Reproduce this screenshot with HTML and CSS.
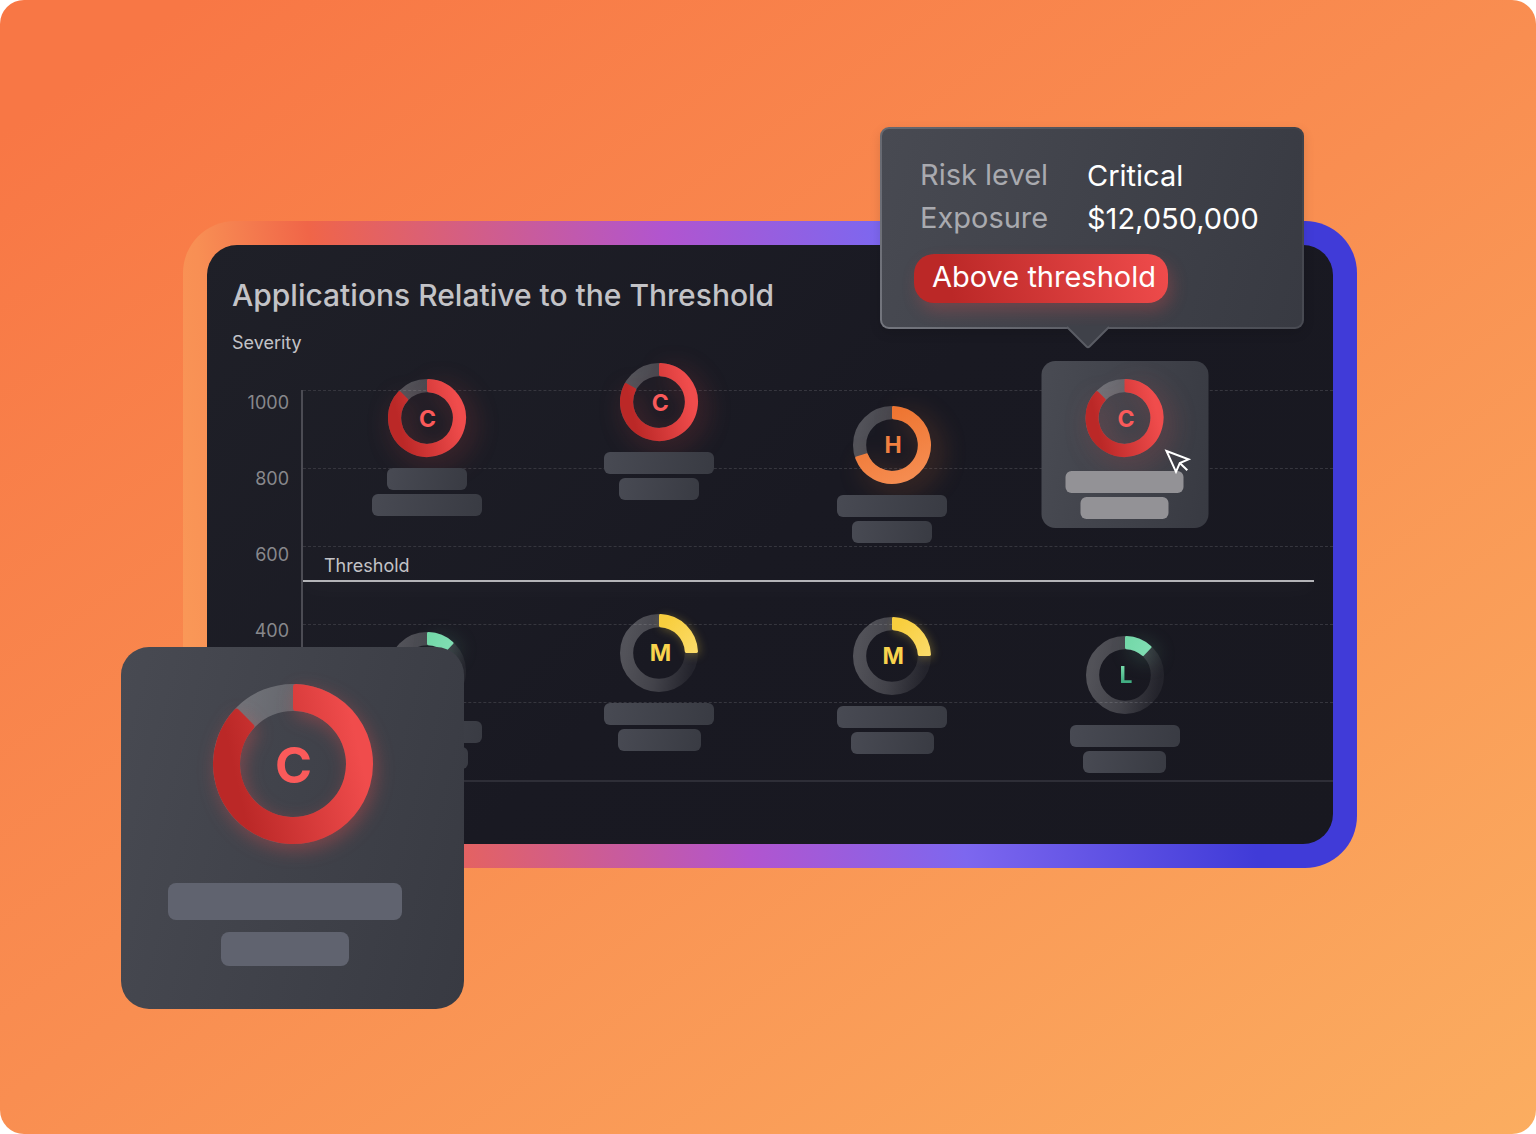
FILE: index.html
```html
<!DOCTYPE html>
<html lang="en">
<head>
    <meta charset="UTF-8">
    <meta name="viewport" content="width=device-width, initial-scale=1.0">
    <title>Applications Relative to the Threshold</title>
    <link rel="stylesheet" href="styles.css">
</head>
<body>
    <!-- shared gradients and ring shapes -->
    <svg class="defs" width="0" height="0" aria-hidden="true">
        <defs>
            <linearGradient id="red" gradientUnits="userSpaceOnUse" x1="22" y1="90" x2="145" y2="62">
                <stop offset="0" stop-color="#bb2827"/>
                <stop offset="1" stop-color="#f04c4c"/>
            </linearGradient>
            <linearGradient id="orange" gradientUnits="userSpaceOnUse" x1="50" y1="20" x2="110" y2="150">
                <stop offset="0" stop-color="#ee7430"/>
                <stop offset="1" stop-color="#f58c50"/>
            </linearGradient>
            <linearGradient id="yellow" gradientUnits="userSpaceOnUse" x1="90" y1="20" x2="155" y2="75">
                <stop offset="0" stop-color="#f8ce3e"/>
                <stop offset="1" stop-color="#fbdb68"/>
            </linearGradient>
            <linearGradient id="green" gradientUnits="userSpaceOnUse" x1="80" y1="10" x2="130" y2="30">
                <stop offset="0" stop-color="#73d8a8"/>
                <stop offset="1" stop-color="#80deb3"/>
            </linearGradient>
            <linearGradient id="track" gradientUnits="userSpaceOnUse" x1="10" y1="70" x2="150" y2="95">
                <stop offset="0" stop-color="#fff" stop-opacity=".25"/>
                <stop offset=".5" stop-color="#fff" stop-opacity=".18"/>
                <stop offset="1" stop-color="#fff" stop-opacity=".05"/>
            </linearGradient>
            <circle id="ring" cx="80" cy="80" r="66.5" fill="none" stroke="url(#track)" stroke-width="27"/>
            <path id="arc-315" d="M83 3.06A77 77 0 1 1 23.48 27.72L38.34 42.58A56 56 0 1 0 83 24.08Z"/>
            <path id="arc-300" d="M83 3.06A77 77 0 1 1 11.87 44.13L30.07 54.64A56 56 0 1 0 83 24.08Z"/>
            <path id="arc-252" d="M83 3.06A77 77 0 1 1 7.76 106.63L27.75 100.13A56 56 0 1 0 83 24.08Z"/>
            <path id="arc-90" d="M83 3.06A77 77 0 0 1 156.94 77L135.92 77A56 56 0 0 0 83 24.08Z"/>
            <path id="arc-44" d="M83 3.06A77 77 0 0 1 131.31 22.59L116.7 37.7A56 56 0 0 0 83 24.08Z"/>
        </defs>
    </svg>

    <main class="stage">
        <div class="frame">
            <section class="panel">
                <h1>Applications Relative to the Threshold</h1>
                <p class="axis-title">Severity</p>

                <div class="chart">
                    <ul class="axis">
                        <li>1000</li>
                        <li>800</li>
                        <li>600</li>
                        <li>400</li>
                    </ul>

                    <div class="plot">
                        <div class="grid">
                            <span></span>
                            <span></span>
                            <span></span>
                            <span></span>
                            <span></span>
                        </div>

                        <div class="threshold">Threshold</div>

                        <div class="point critical" style="left: 12%; top: -2.8%">
                            <div class="donut">
                                <svg viewBox="0 0 160 160"><use href="#ring"/><use class="arc" href="#arc-315"/></svg>
                                <span>C</span>
                            </div>
                            <i class="bar short"></i>
                            <i class="bar"></i>
                        </div>

                        <div class="point critical" style="left: 34.6%; top: -6.8%">
                            <div class="donut">
                                <svg viewBox="0 0 160 160"><use href="#ring"/><use class="arc" href="#arc-300"/></svg>
                                <span>C</span>
                            </div>
                            <i class="bar"></i>
                            <i class="bar short"></i>
                        </div>

                        <div class="point high" style="left: 57.2%; top: 4.1%">
                            <div class="donut">
                                <svg viewBox="0 0 160 160"><use href="#ring"/><use class="arc" href="#arc-252"/></svg>
                                <span>H</span>
                            </div>
                            <i class="bar"></i>
                            <i class="bar short"></i>
                        </div>

                        <div class="point critical selected" style="left: 79.8%; top: -7.4%">
                            <div class="donut">
                                <svg viewBox="0 0 160 160"><use href="#ring"/><use class="arc" href="#arc-315"/></svg>
                                <span>C</span>
                            </div>
                            <i class="bar"></i>
                            <i class="bar short"></i>
                            <svg class="cursor" viewBox="0 0 32 32">
                                <path d="M6 6L28 14.3L19.3 18L15.5 26.8Z"/>
                                <path d="M19.3 18L26.8 25.3"/>
                            </svg>
                        </div>

                        <div class="point low" style="left: 12%; top: 62.1%">
                            <div class="donut">
                                <svg viewBox="0 0 160 160"><use href="#ring"/><use class="arc" href="#arc-44"/></svg>
                            </div>
                            <i class="bar"></i>
                            <i class="bar short"></i>
                        </div>

                        <div class="point medium" style="left: 34.6%; top: 57.4%">
                            <div class="donut">
                                <svg viewBox="0 0 160 160"><use href="#ring"/><use class="arc" href="#arc-90"/></svg>
                                <span>M</span>
                            </div>
                            <i class="bar"></i>
                            <i class="bar short"></i>
                        </div>

                        <div class="point medium" style="left: 57.2%; top: 58.2%">
                            <div class="donut">
                                <svg viewBox="0 0 160 160"><use href="#ring"/><use class="arc" href="#arc-90"/></svg>
                                <span>M</span>
                            </div>
                            <i class="bar"></i>
                            <i class="bar short"></i>
                        </div>

                        <div class="point low" style="left: 79.8%; top: 63%">
                            <div class="donut">
                                <svg viewBox="0 0 160 160"><use href="#ring"/><use class="arc" href="#arc-44"/></svg>
                                <span>L</span>
                            </div>
                            <i class="bar"></i>
                            <i class="bar short"></i>
                        </div>
                    </div>
                </div>
            </section>

            <div class="tooltip" role="tooltip">
                <dl>
                    <dt>Risk level</dt>
                    <dd>Critical</dd>
                    <dt>Exposure</dt>
                    <dd>$12,050,000</dd>
                </dl>
                <span class="badge">Above threshold</span>
                <svg class="arrow" viewBox="0 0 44 24">
                    <path class="arrow-fill" d="M2 0V2L20.5 20.5Q22 22 23.5 20.5L42 2V0Z"/>
                    <path class="arrow-line" d="M1 1L20.5 20.5Q22 22 23.5 20.5L43 1"/>
                </svg>
            </div>

            <aside class="card critical">
                <div class="donut large">
                    <svg viewBox="0 0 160 160"><use href="#ring"/><use class="arc" href="#arc-315"/></svg>
                    <span>C</span>
                </div>
                <div class="card-lines">
                    <i></i>
                    <i></i>
                </div>
            </aside>
        </div>
    </main>
</body>
</html>
```
FILE: styles.css
```css
* {
    box-sizing: border-box;
}
body {
    margin: 0;
    background: #fff;
    font-family: Inter, "Liberation Sans", sans-serif;
    color: #c3c3c7;
}
.defs {
    position: absolute;
}
.stage {
    min-height: 100vh;
    padding: 221px 179px 266px 183px;
    border-radius: 24px;
    background: linear-gradient(145deg, #f87745 6%, #f98e51 50%, #fbad60);
    overflow: hidden;
}

/* chart window */
.frame {
    position: relative;
    padding: 24px;
    border-radius: 52px;
    background: linear-gradient(82deg, #fb9c59 0%, #f88f54 8%, #f06548 17%, #b155cf 45%, #7d67ef 62%, #403bd8 85%);
}
.panel {
    padding: 30px 0 62px;
    border-radius: 30px;
    background: linear-gradient(135deg, #1f2028, #191922 50%, #181820);
}
h1 {
    margin: 0 25px;
    font-size: 30px;
    font-weight: 500;
    line-height: 40px;
}
.axis-title {
    margin: 16px 25px 35px;
    font-size: 18px;
    line-height: 24px;
}
.chart {
    display: grid;
    grid-template-columns: 94px 1fr;
}
.axis {
    display: flex;
    flex-direction: column;
    gap: 52px;
    margin: 0;
    padding: 1px 12px 0 0;
    list-style: none;
    text-align: right;
    font-size: 18px;
    line-height: 24px;
    color: #88888c;
}
.plot {
    position: relative;
    height: 392px;
    border-left: 2px solid #4c4c54;
    border-bottom: 2px solid #2e2e37;
}
.grid {
    display: flex;
    flex-direction: column;
    height: 100%;
}
.grid span {
    flex: 1;
    border-top: 1px dashed #36363e;
}
.threshold {
    position: absolute;
    top: 162px;
    left: 0;
    right: 19px;
    padding-left: 21px;
    border-bottom: 2px solid #b4b4b8;
    font-size: 18px;
    line-height: 28px;
    box-shadow: 0 12px 20px rgba(255, 255, 255, 0.02);
}

/* points */
.point {
    position: absolute;
    display: flex;
    flex-direction: column;
    align-items: center;
    gap: 4px;
    transform: translateX(-50%);
}
.donut {
    display: grid;
    place-items: center;
    width: 78px;
    height: 78px;
    margin-bottom: 7px;
    font-size: 23px;
    font-weight: 700;
    line-height: 1;
}
.donut svg,
.donut span {
    grid-area: 1 / 1;
}
.donut svg {
    width: 100%;
    height: 100%;
    overflow: visible;
}
.donut span {
    padding: 2px 0 0 2px;
}
.arc {
    stroke-width: 6px;
    stroke-linejoin: round;
}
.critical .arc {
    fill: url(#red);
    stroke: url(#red);
    filter: drop-shadow(12px 14px 26px rgba(239, 76, 76, 0.25));
}
.critical .donut {
    color: #fa5a5a;
}
.high .arc {
    fill: url(#orange);
    stroke: url(#orange);
    filter: drop-shadow(16px 14px 26px rgba(240, 120, 50, 0.25));
}
.high .donut {
    color: #f08040;
}
.medium .arc {
    fill: url(#yellow);
    stroke: url(#yellow);
    filter: drop-shadow(4px 4px 10px rgba(248, 208, 64, 0.3));
}
.medium .donut {
    color: #f8d34d;
}
.low .arc {
    fill: url(#green);
    stroke: url(#green);
    filter: drop-shadow(12px 12px 20px rgba(116, 217, 169, 0.25));
}
.low .donut span {
    background: linear-gradient(#74d9a9 20%, #38a57b 90%);
    background-clip: text;
    color: transparent;
}
.bar {
    width: 110px;
    height: 22px;
    border-radius: 6px;
    background: linear-gradient(100deg, #484a53, #393b43);
}
.bar.short {
    width: 80px;
}
.medium .short,
.low .short {
    width: 83px;
}
.selected {
    width: 167px;
    padding: 18px 0 9px;
    border-radius: 14px;
    background: linear-gradient(100deg, #494b53, #383a42);
}
.selected .donut {
    margin-bottom: 10px;
}
.selected .bar {
    width: 118px;
    background: #939296;
}
.selected .short {
    width: 88px;
}
.cursor {
    position: absolute;
    top: 84px;
    left: 119px;
    width: 32px;
    height: 32px;
    fill: none;
    stroke: #fff;
    stroke-width: 2px;
}

/* tooltip */
.tooltip {
    position: absolute;
    top: -94px;
    right: 53px;
    width: 424px;
    padding: 24px 32px;
    border: 2px solid transparent;
    border-radius: 9px;
    background:
        linear-gradient(105deg, #484a52, #383a42) padding-box,
        linear-gradient(60deg, #74767e, #55575f 50%, #3f4149) border-box;
    box-shadow: 0 4px 12px rgba(0, 0, 0, 0.12);
    font-size: 29px;
}
.tooltip dl {
    display: grid;
    grid-template-columns: 167px 1fr;
    margin: 0 0 15px 6px;
    line-height: 43px;
}
.tooltip dt {
    color: #a9aaaf;
}
.tooltip dd {
    margin: 0;
    padding-top: 1px;
    color: #fff;
}
.tooltip dt,
.tooltip dd {
    height: 43px;
}
.badge {
    display: inline-block;
    padding: 0 12px 3px 18px;
    border-radius: 20px;
    background: linear-gradient(75deg, #bb2827 15%, #f04c4c);
    box-shadow: 4px 8px 16px rgba(239, 76, 76, 0.25);
    line-height: 46px;
    color: #fff;
}
.arrow {
    position: absolute;
    top: calc(100% - 1px);
    left: 184px;
    width: 44px;
    height: 24px;
}
.arrow-fill {
    fill: #3f4149;
}
.arrow-line {
    fill: none;
    stroke: #5a5c64;
    stroke-width: 2px;
}

/* enlarged card */
.card {
    position: absolute;
    left: -62px;
    bottom: -141px;
    display: flex;
    flex-direction: column;
    align-items: center;
    width: 343px;
    padding: 37px 0 43px;
    border-radius: 28px;
    background: linear-gradient(105deg, #484a52, #383a42);
}
.donut.large {
    width: 160px;
    height: 160px;
    margin-bottom: 39px;
    font-size: 50px;
}
.large .arc {
    filter: drop-shadow(3px 6px 9px rgba(239, 76, 76, 0.35));
}
.card-lines {
    display: grid;
    justify-items: center;
    gap: 12px;
    margin-right: 15px;
}
.card-lines i {
    width: 234px;
    height: 37px;
    border-radius: 8px;
    background: #60636f;
}
.card-lines i:last-child {
    width: 128px;
    height: 34px;
}
```
